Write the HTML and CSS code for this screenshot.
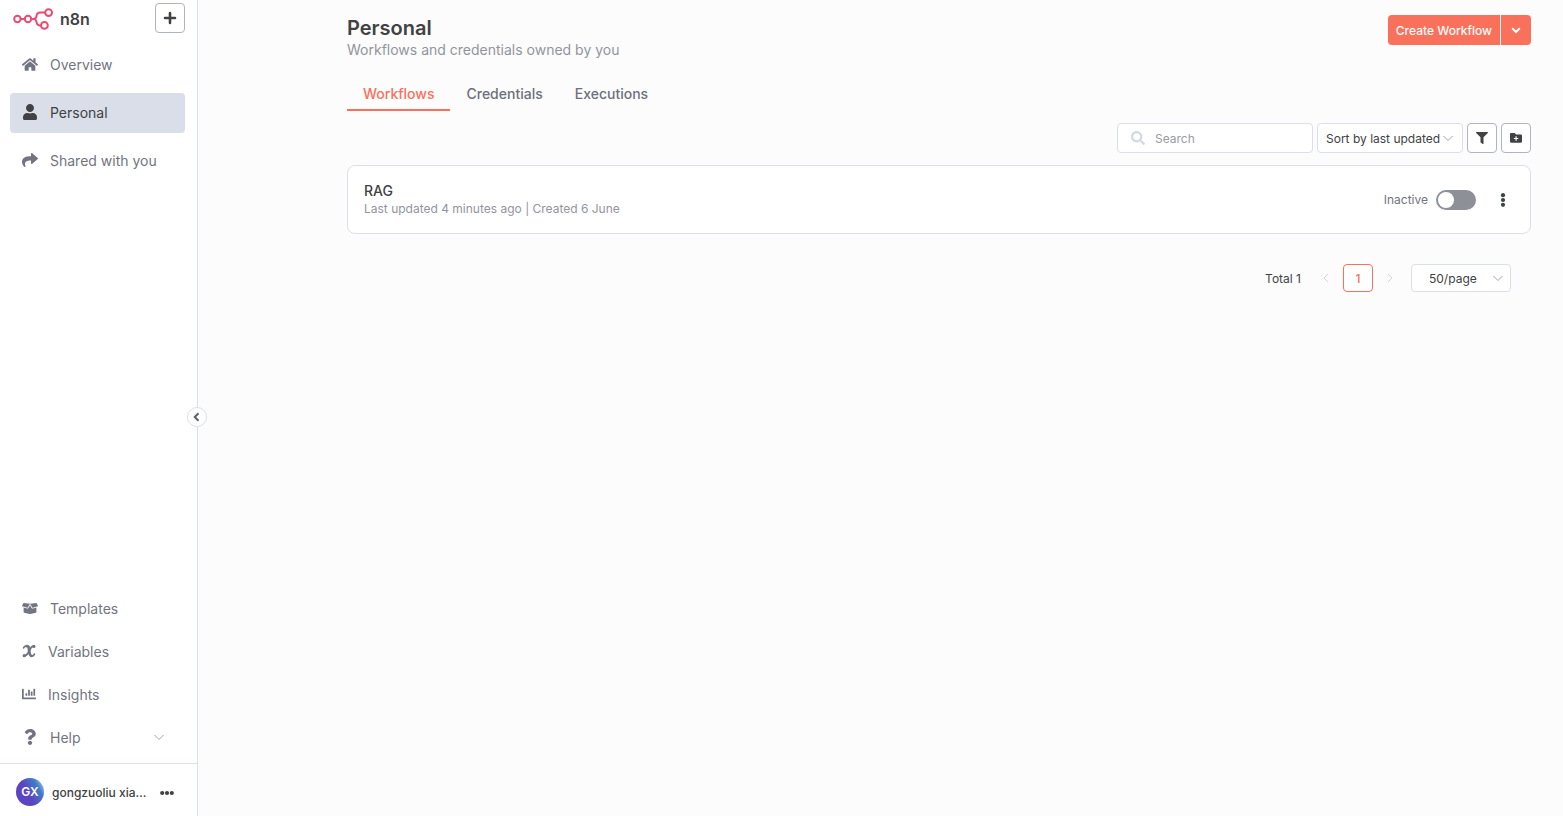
FILE: index.html
```
<!DOCTYPE html>
<html lang="en">
<head>
    <meta charset="UTF-8">
    <title>Personal - n8n</title>
    <meta name="viewport" content="width=device-width, initial-scale=1.0">
    <link rel="stylesheet" href="styles.css">
</head>
<body>
    <aside class="sidebar">
        <div class="sidebar-header">
            <a href="#" class="logo">
                <svg width="40" height="22" viewBox="0 0 40 22" fill="none" stroke="#ea4b71" stroke-width="2">
                    <circle cx="4.4" cy="11" r="3.2"/>
                    <circle cx="15" cy="11" r="3.2"/>
                    <circle cx="35.600" cy="4.600" r="3.4"/>
                    <circle cx="31.400" cy="17.400" r="3.4"/>
                    <path d="M7.600 11H11.800M18.2 11h2.400c1.4 0 2.4-.9 2.7-2.2l.3-1.4c.4-1.700 1.600-2.800 3.400-2.800h5.200M20.600 11c1.4 0 2.300.9 2.700 2.200l.4 1.600c.4 1.700 1.500 2.600 3.200 2.600h1.100"/>
                </svg>
                <span>n8n</span>
            </a>
            <button class="icon-btn" aria-label="Create new">
                <svg width="14" height="14" viewBox="0 0 14 14" fill="none" stroke="currentColor" stroke-width="2.6" stroke-linecap="round"><path d="M7 2v10M2 7h10"/></svg>
            </button>
        </div>

        <nav class="menu">
            <a href="#">
                <svg width="16" height="15" viewBox="0 0 576 512"><path d="M280.37 148.26L96 300.11V464a16 16 0 0 0 16 16l112.06-.29a16 16 0 0 0 15.92-16V368a16 16 0 0 1 16-16h64a16 16 0 0 1 16 16v95.64a16 16 0 0 0 16 16.05L464 480a16 16 0 0 0 16-16V300L295.67 148.26a12.19 12.19 0 0 0-15.3 0zM571.6 251.47L488 182.56V44.05a12 12 0 0 0-12-12h-56a12 12 0 0 0-12 12v72.61L318.47 43a48 48 0 0 0-61 0L4.34 251.47a12 12 0 0 0-1.6 16.9l25.5 31A12 12 0 0 0 45.15 301l235.22-193.74a12.19 12.19 0 0 1 15.3 0L530.9 301a12 12 0 0 0 16.9-1.6l25.5-31a12 12 0 0 0-1.7-16.93z"/></svg>
                Overview
            </a>
            <a href="#" class="active">
                <svg width="16" height="16" viewBox="0 0 448 512"><path d="M224 256c70.7 0 128-57.3 128-128S294.7 0 224 0 96 57.3 96 128s57.3 128 128 128zm89.6 32h-16.7c-22.2 10.2-46.9 16-72.9 16s-50.6-5.8-72.9-16h-16.7C60.2 288 0 348.2 0 422.4V464c0 26.5 21.5 48 48 48h352c26.5 0 48-21.5 48-48v-41.6c0-74.2-60.2-134.4-134.4-134.4z"/></svg>
                Personal
            </a>
            <a href="#">
                <svg width="16" height="16" viewBox="0 0 512 512"><path d="M503.691 189.836L327.687 37.851C312.281 24.546 288 35.347 288 56.015v80.053C127.371 137.907 0 170.1 0 322.326c0 61.441 39.581 122.309 83.333 154.132 13.653 9.931 33.111-2.533 28.077-18.631C66.066 312.814 132.917 274.316 288 272.085V360c0 20.7 24.3 31.453 39.687 18.164l176.004-152c11.071-9.562 11.086-26.753 0-36.328z"/></svg>
                Shared with you
            </a>
        </nav>

        <nav class="menu menu-bottom">
            <a href="#">
                <svg width="16" height="13" viewBox="0 0 640 512"><path d="M425.7 256c-16.9 0-32.8-9-41.4-23.4L320 126l-64.2 106.6c-8.7 14.5-24.6 23.5-41.5 23.5-4.5 0-9-.6-13.3-1.9L64 215v178c0 14.7 10 27.5 24.2 31l216.2 54.1c10.2 2.5 20.9 2.5 31 0L551.8 424c14.2-3.6 24.2-16.4 24.2-31V215l-137 39.1c-4.3 1.3-8.8 1.9-13.3 1.9zm212.6-112.2L586.8 41c-3.1-6.2-9.8-9.8-16.7-8.9L320 64l91.7 152.1c3.8 6.3 11.4 9.3 18.5 7.3l197.9-56.5c9.9-2.9 14.7-13.9 10.2-23.1zM53.2 41L1.7 143.8c-4.6 9.2.3 20.2 10.1 23l197.9 56.5c7.1 2 14.7-1 18.5-7.3L320 64 69.8 32.1c-6.9-.8-13.5 2.7-16.6 8.9z"/></svg>
                Templates
            </a>
            <a href="#" class="compact">
                <svg width="14" height="14" viewBox="0 0 14 14" fill="none" stroke="currentColor" stroke-linecap="round">
                    <path stroke-width="2.8" d="M4.8 2.200c2.200-.3 2 1.800 2.400 4.600.4 3.200.4 4.800 2.200 5"/>
                    <path stroke-width="1.800" d="M4.600 1.800C3 1.800 2 2.600 1.600 3.800M9.400 12.200c1.600 0 2.600-.8 3-2M12 2.200C9.400 1.600 8.400 4.600 7.200 7S4.600 12 2 11.800"/>
                    <path stroke-width="3.2" d="M11.900 2.400v.1M2.200 11.600v.1"/>
                </svg>
                Variables
            </a>
            <a href="#" class="compact">
                <svg width="14" height="14" viewBox="0 0 512 512"><path d="M496 384H64V80c0-8.84-7.16-16-16-16H16C7.16 64 0 71.16 0 80v336c0 17.67 14.33 32 32 32h464c8.84 0 16-7.16 16-16v-32c0-8.84-7.16-16-16-16z"/><rect x="128" y="224" width="64" height="96" rx="13"/><rect x="224" y="96" width="64" height="224" rx="13"/><rect x="320" y="160" width="64" height="160" rx="13"/><rect x="416" y="64" width="64" height="256" rx="13"/></svg>
                Insights
            </a>
            <a href="#">
                <svg width="16" height="16" viewBox="0 0 384 512"><path d="M202.021 0C122.202 0 70.503 32.703 29.914 91.026c-7.363 10.58-5.093 25.086 5.178 32.874l43.138 32.709c10.373 7.865 25.132 6.026 33.253-4.148 25.049-31.381 43.63-49.449 82.757-49.449 30.764 0 68.816 19.799 68.816 49.631 0 22.552-18.617 34.134-48.993 51.164-35.423 19.86-82.299 44.576-82.299 106.405V320c0 13.255 10.745 24 24 24h72.471c13.255 0 24-10.745 24-24v-5.773c0-42.86 125.268-44.645 125.268-160.627C377.504 66.256 286.902 0 202.021 0zM192 373.459c-38.196 0-69.271 31.075-69.271 69.271 0 38.195 31.075 69.27 69.271 69.27s69.271-31.075 69.271-69.271-31.075-69.27-69.271-69.27z"/></svg>
                Help
                <svg class="chevron" width="10" height="10" viewBox="0 0 10 10"><path d="M.5 3L5 7.5 9.5 3"/></svg>
            </a>
        </nav>

        <div class="user">
            <span class="avatar">GX</span>
            <span class="user-name">gongzuoliu xia…</span>
            <button class="plain-btn" aria-label="User menu">
                <svg width="14" height="6" viewBox="0 0 14 6"><circle cx="2.2" cy="3" r="2.1"/><circle cx="7" cy="3" r="2.1"/><circle cx="11.8" cy="3" r="2.1"/></svg>
            </button>
        </div>

        <button class="collapse" aria-label="Collapse sidebar">
            <svg width="10" height="10" viewBox="0 0 10 10" fill="none" stroke="currentColor" stroke-width="2"><path d="M6.5 1.2L2.7 5l3.8 3.8"/></svg>
        </button>
    </aside>

    <main>
        <header>
            <div class="heading">
                <h1>Personal</h1>
                <p>Workflows and credentials owned by you</p>
            </div>
            <div class="create">
                <button class="create-main">Create Workflow</button>
                <button class="create-more" aria-label="More options">
                    <svg width="10" height="10" viewBox="0 0 10 10" fill="none" stroke="currentColor" stroke-width="2"><path d="M1.2 3.2L5 7l3.8-3.8"/></svg>
                </button>
            </div>
        </header>

        <nav class="tabs">
            <a href="#" class="active">Workflows</a>
            <a href="#">Credentials</a>
            <a href="#">Executions</a>
        </nav>

        <div class="toolbar">
            <label class="search">
                <svg width="14" height="14" viewBox="0 0 512 512"><path d="M505 442.7L405.3 343c-4.5-4.5-10.6-7-17-7H372c27.6-35.3 44-79.7 44-128C416 93.1 322.9 0 208 0S0 93.1 0 208s93.1 208 208 208c48.3 0 92.7-16.4 128-44v16.3c0 6.4 2.5 12.5 7 17l99.7 99.7c9.4 9.4 24.6 9.4 33.9 0l28.3-28.3c9.4-9.4 9.4-24.6.1-34zM208 336c-70.7 0-128-57.2-128-128 0-70.7 57.2-128 128-128 70.7 0 128 57.2 128 128 0 70.7-57.2 128-128 128z"/></svg>
                <input type="text" placeholder="Search" aria-label="Search">
            </label>
            <div class="select sort">
                <select aria-label="Sort">
                    <option>Sort by last updated</option>
                    <option>Sort by last created</option>
                    <option>Sort by name (A-Z)</option>
                </select>
                <svg class="chevron" width="10" height="10" viewBox="0 0 10 10"><path d="M.5 3L5 7.5 9.5 3"/></svg>
            </div>
            <button class="icon-btn" aria-label="Filters">
                <svg width="12" height="12" viewBox="0 0 512 512"><path d="M487.976 0H24.028C2.71 0-8.047 25.866 7.058 40.971L192 225.941V432c0 7.831 3.821 15.17 10.237 19.662l80 55.98C298.02 518.69 320 507.493 320 487.98V225.941l184.947-184.97C520.021 25.896 509.338 0 487.976 0z"/></svg>
            </button>
            <button class="icon-btn" aria-label="Add folder">
                <svg width="12" height="10" viewBox="0 0 12 10"><path fill-rule="evenodd" d="M1.2 0h3.6L6 1.4h4.8c.7 0 1.2.5 1.2 1.1v6c0 .7-.5 1.2-1.2 1.2H1.2C.5 9.700 0 9.2 0 8.500V1.200C0 .5.5 0 1.200 0zM5.500 3.300v1.600H3.900v1.200h1.600v1.600h1.200V6.100h1.600V4.900H6.700V3.300z"/></svg>
            </button>
        </div>

        <section class="card">
            <div>
                <h2>RAG</h2>
                <p>Last updated 4 minutes ago | Created 6 June</p>
            </div>
            <div class="card-actions">
                <label for="active">Inactive</label>
                <input type="checkbox" id="active" class="switch">
                <button class="plain-btn" aria-label="Workflow actions">
                    <svg width="6" height="14" viewBox="0 0 6 14"><circle cx="3" cy="2.2" r="2.1"/><circle cx="3" cy="7" r="2.1"/><circle cx="3" cy="11.8" r="2.1"/></svg>
                </button>
            </div>
        </section>

        <div class="pagination">
            <span class="total">Total 1</span>
            <button class="plain-btn" aria-label="Previous page" disabled>
                <svg class="chevron" width="10" height="10" viewBox="0 0 10 10"><path d="M7 1L3 5l4 4"/></svg>
            </button>
            <button class="page">1</button>
            <button class="plain-btn" aria-label="Next page" disabled>
                <svg class="chevron" width="10" height="10" viewBox="0 0 10 10"><path d="M3 1l4 4-4 4"/></svg>
            </button>
            <div class="select page-size">
                <select aria-label="Page size">
                    <option>50/page</option>
                    <option>100/page</option>
                </select>
                <svg class="chevron" width="10" height="10" viewBox="0 0 10 10"><path d="M.5 3L5 7.5 9.5 3"/></svg>
            </div>
        </div>
    </main>
</body>
</html>
```
FILE: styles.css
```
* {
    box-sizing: border-box;
}

body {
    display: flex;
    margin: 0;
    min-height: 100vh;
    font-family: Inter, "Open Sans", sans-serif;
    font-size: 14px;
    color: #414244;
    background-color: #fcfcfc;
}

h1, h2, p {
    margin: 0;
}

a {
    color: inherit;
    text-decoration: none;
}

button, input, select {
    font-family: inherit;
    color: inherit;
}

button {
    display: flex;
    align-items: center;
    justify-content: center;
    padding: 0;
    border: none;
    background: none;
    cursor: pointer;
}

svg {
    flex-shrink: 0;
}

svg:not([fill]) {
    fill: currentColor;
}

svg.chevron {
    fill: none;
    stroke: #a0a3ab;
    stroke-width: 1;
}

.icon-btn {
    width: 30px;
    height: 30px;
    border: 1px solid #b0b4be;
    border-radius: 4px;
    background-color: #fff;
}

/* Sidebar */
.sidebar {
    position: relative;
    display: flex;
    flex-direction: column;
    flex-shrink: 0;
    width: 198px;
    background-color: #fff;
    border-right: 1px solid #dbdfe9;
}

.sidebar-header {
    display: flex;
    justify-content: space-between;
    padding: 3px 12px 12px 13px;
}

.logo {
    display: flex;
    align-items: center;
    gap: 7px;
    padding-top: 2px;
    font-size: 16px;
    font-weight: 600;
    line-height: 20px;
}

.menu {
    display: flex;
    flex-direction: column;
    gap: 8px;
    padding: 0 12px 0 10px;
    color: #727580;
}

.menu a {
    display: flex;
    align-items: center;
    gap: 12px;
    height: 40px;
    padding: 0 21px 2px 12px;
    border-radius: 4px;
}

.menu .active {
    background-color: #dadee9;
    color: #414244;
}

.menu .chevron {
    margin-left: auto;
}

.menu-bottom {
    gap: 3px;
    margin-top: auto;
    padding-bottom: 5px;
}

.user {
    display: flex;
    align-items: center;
    gap: 8px;
    height: 53px;
    padding: 4px 23px 0 16px;
    border-top: 1px solid #dbdfe9;
}

.avatar {
    width: 28px;
    height: 28px;
    border-radius: 50%;
    background: linear-gradient(60deg, #5b45c0 45%, #3f7fca 75%, #cfe0f2 100%);
    color: #fff;
    font-size: 12px;
    font-weight: 600;
    line-height: 28px;
    text-align: center;
}

.user-name {
    flex: 1;
    white-space: nowrap;
    font-size: 12px;
    font-weight: 500;
    line-height: 16px;
    padding-top: 2px;
}

.user .plain-btn {
    padding-top: 2px;
}

.collapse {
    position: absolute;
    top: 51%;
    right: -10px;
    width: 20px;
    height: 20px;
    margin-top: -9px;
    border: 1px solid #dbdfe9;
    border-radius: 50%;
    background-color: #fff;
    color: #5f626c;
}

/* Main content */
main {
    flex: 1;
    padding: 15px 32px 32px 149px;
}

header {
    display: flex;
    justify-content: space-between;
    align-items: flex-start;
}

.heading {
    padding-top: 1px;
}

h1 {
    font-size: 20px;
    font-weight: 600;
    line-height: 25px;
}

.heading p {
    color: #92959e;
    line-height: 18px;
}

.create {
    display: flex;
    gap: 1px;
    color: #fff;
}

.create button {
    height: 30px;
    background-color: #f9705b;
}

.create-main {
    padding: 0 8px;
    border-radius: 4px 0 0 4px;
    font-size: 12px;
    font-weight: 500;
}

.create .create-more {
    width: 30px;
    border-radius: 0 4px 4px 0;
}

.tabs {
    display: flex;
    margin-top: 18px;
    font-weight: 500;
    color: #6d707a;
}

.tabs a {
    padding: 8px 16px 6px;
    line-height: 18px;
    border-bottom: 2px solid transparent;
}

.tabs .active {
    color: #f9705b;
    border-color: #f9705b;
}

.toolbar {
    display: flex;
    justify-content: flex-end;
    gap: 4px;
    margin-top: 12px;
}

.search {
    display: flex;
    align-items: center;
    gap: 10px;
    width: 196px;
    padding: 0 13px;
    border: 1px solid #dbdfe9;
    border-radius: 4px;
    background-color: #fff;
    color: #d3d8e4;
}

.search input {
    width: 100%;
    padding: 0;
    border: none;
    outline: none;
    background: none;
    font-size: 12px;
    color: #414244;
}

.search input::placeholder {
    color: #9a9ca3;
}

.select {
    position: relative;
}

.select select {
    appearance: none;
    width: 100%;
    height: 100%;
    padding: 0 8px;
    border: 1px solid #dbdfe9;
    border-radius: 4px;
    background-color: #fff;
    font-size: 12px;
}

/* arrow drawn over the native select */
.select .chevron {
    position: absolute;
    top: 50%;
    right: 10px;
    margin-top: -5px;
    pointer-events: none;
}

.sort {
    width: 146px;
}

.card {
    display: flex;
    justify-content: space-between;
    align-items: center;
    margin-top: 12px;
    padding: 16px;
    border: 1px solid #dbdfe9;
    border-radius: 8px;
    background-color: #fff;
}

.card h2 {
    font-size: 14px;
    font-weight: 500;
    line-height: 18px;
}

.card p {
    font-size: 12px;
    line-height: 17px;
    color: #92959e;
}

.card-actions {
    display: flex;
    align-items: center;
    gap: 8px;
    font-size: 12px;
    color: #71747d;
}

.switch {
    appearance: none;
    width: 40px;
    height: 20px;
    margin: 0;
    padding: 2px;
    border-radius: 10px;
    background-color: #8e9098;
}

.switch::before {
    content: "";
    display: block;
    width: 16px;
    height: 16px;
    border-radius: 50%;
    background-color: #fff;
}

.card-actions .plain-btn {
    width: 30px;
    height: 20px;
    padding-left: 8px;
    color: #414244;
}

.pagination {
    display: flex;
    justify-content: flex-end;
    align-items: center;
    margin-top: 30px;
    padding-right: 20px;
    font-size: 12px;
}

.total {
    margin-right: 8px;
}

.pagination .plain-btn {
    width: 34px;
    height: 28px;
}

.pagination .plain-btn .chevron {
    stroke: #cfd4e0;
}

.page {
    width: 30px;
    height: 28px;
    border: 1px solid #f9705b;
    border-radius: 4px;
    background-color: #fff;
    color: #f9705b;
    font-size: 12px;
    font-weight: 500;
}

.page-size {
    width: 100px;
    height: 28px;
    margin-left: 4px;
}

.page-size select {
    padding-left: 17px;
}

.page-size .chevron {
    right: 8px;
}
```
